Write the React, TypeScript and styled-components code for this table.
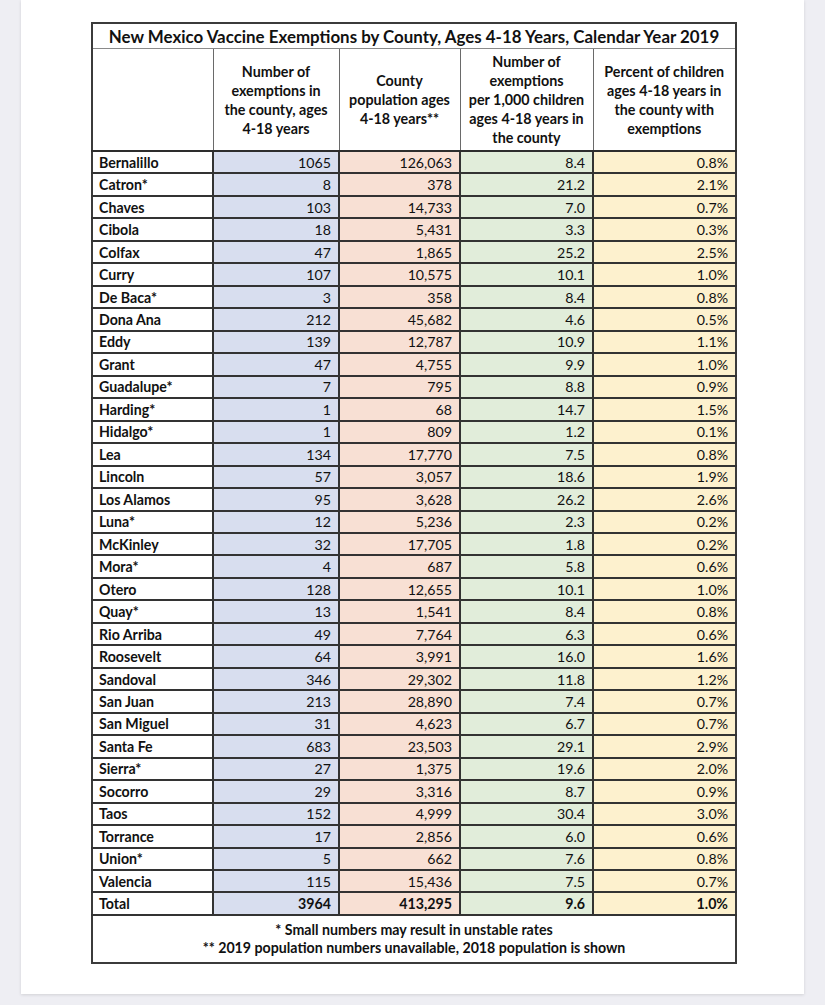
import React from "react";
import styled, { createGlobalStyle } from "styled-components";

const Global = createGlobalStyle`
  html, body { margin: 0; padding: 0; background: #eeeef3; }
  body { font-family: "Lato", "Open Sans", sans-serif; }
`;

const Screen = styled.div`
  width: 825px;
  height: 1005px;
  background: #eeeef3;
  overflow: hidden;
`;

const Sheet = styled.div`
  margin-left: 21px;
  width: 783px;
  height: 972px;
  padding-top: 22px;
  background: #ffffff;
  box-shadow: 0 1px 3px rgba(0, 0, 0, 0.12);
  box-sizing: content-box;
`;

const Table = styled.table`
  margin-left: 70px;
  width: 644px;
  border-collapse: collapse;
  table-layout: fixed;
  color: #111;
  border: 2px solid #3b3b3b;
`;

const TitleCell = styled.th`
  height: 24px;
  padding: 0;
  font-size: 16.9px;
  font-weight: 700;
  text-align: center;
  border-bottom: 1px solid #8a8a8a;
  white-space: nowrap;
`;

const HeadCell = styled.th`
  height: 101px;
  padding: 0 2px;
  font-size: 14.3px;
  line-height: 19px;
  font-weight: 700;
  text-align: center;
  vertical-align: middle;
  border-left: 1px solid #6a6a6a;
  border-bottom: 2px solid #2d2d2d;
  white-space: nowrap;
  &:first-child { border-left: none; }
`;

type Tone = "blue" | "peach" | "green" | "yellow";
const tones: Record<Tone, string> = {
  blue: "#d8deef",
  peach: "#f8e0d4",
  green: "#e1edda",
  yellow: "#fdf1ce",
};

const NameCell = styled.td`
  height: 20.48px;
  padding: 0 6px;
  font-size: 14.2px;
  font-weight: 700;
  text-align: left;
  border-top: 2px solid #333;
  white-space: nowrap;
`;

const NumCell = styled.td<{ $tone: Tone; $bold?: boolean }>`
  padding: 0 7px;
  font-size: 14.2px;
  font-weight: ${(p) => (p.$bold ? 700 : 400)};
  text-align: right;
  background: ${(p) => tones[p.$tone]};
  border-top: 2px solid #333;
  border-left: 2px solid #333;
  white-space: nowrap;
`;

const FootCell = styled.td`
  height: 46px;
  padding: 0;
  font-size: 14.2px;
  line-height: 18px;
  font-weight: 700;
  text-align: center;
  border-top: 2px solid #333;
`;

const rows: [string, string, string, string, string][] = [
  ["Bernalillo", "1065", "126,063", "8.4", "0.8%"],
  ["Catron*", "8", "378", "21.2", "2.1%"],
  ["Chaves", "103", "14,733", "7.0", "0.7%"],
  ["Cibola", "18", "5,431", "3.3", "0.3%"],
  ["Colfax", "47", "1,865", "25.2", "2.5%"],
  ["Curry", "107", "10,575", "10.1", "1.0%"],
  ["De Baca*", "3", "358", "8.4", "0.8%"],
  ["Dona Ana", "212", "45,682", "4.6", "0.5%"],
  ["Eddy", "139", "12,787", "10.9", "1.1%"],
  ["Grant", "47", "4,755", "9.9", "1.0%"],
  ["Guadalupe*", "7", "795", "8.8", "0.9%"],
  ["Harding*", "1", "68", "14.7", "1.5%"],
  ["Hidalgo*", "1", "809", "1.2", "0.1%"],
  ["Lea", "134", "17,770", "7.5", "0.8%"],
  ["Lincoln", "57", "3,057", "18.6", "1.9%"],
  ["Los Alamos", "95", "3,628", "26.2", "2.6%"],
  ["Luna*", "12", "5,236", "2.3", "0.2%"],
  ["McKinley", "32", "17,705", "1.8", "0.2%"],
  ["Mora*", "4", "687", "5.8", "0.6%"],
  ["Otero", "128", "12,655", "10.1", "1.0%"],
  ["Quay*", "13", "1,541", "8.4", "0.8%"],
  ["Rio Arriba", "49", "7,764", "6.3", "0.6%"],
  ["Roosevelt", "64", "3,991", "16.0", "1.6%"],
  ["Sandoval", "346", "29,302", "11.8", "1.2%"],
  ["San Juan", "213", "28,890", "7.4", "0.7%"],
  ["San Miguel", "31", "4,623", "6.7", "0.7%"],
  ["Santa Fe", "683", "23,503", "29.1", "2.9%"],
  ["Sierra*", "27", "1,375", "19.6", "2.0%"],
  ["Socorro", "29", "3,316", "8.7", "0.9%"],
  ["Taos", "152", "4,999", "30.4", "3.0%"],
  ["Torrance", "17", "2,856", "6.0", "0.6%"],
  ["Union*", "5", "662", "7.6", "0.8%"],
  ["Valencia", "115", "15,436", "7.5", "0.7%"],
];

export default function App() {
  return (
    <Screen>
      <Global />
      <Sheet>
        <Table>
          <colgroup>
            <col style={{ width: 121 }} />
            <col style={{ width: 126 }} />
            <col style={{ width: 121 }} />
            <col style={{ width: 133 }} />
            <col style={{ width: 143 }} />
          </colgroup>
          <thead>
            <tr>
              <TitleCell colSpan={5}>
                New Mexico Vaccine Exemptions by County, Ages 4-18 Years, Calendar Year 2019
              </TitleCell>
            </tr>
            <tr>
              <HeadCell></HeadCell>
              <HeadCell>
                Number of
                <br />
                exemptions in
                <br />
                the county, ages
                <br />
                4-18 years
              </HeadCell>
              <HeadCell>
                County
                <br />
                population ages
                <br />
                4-18 years**
              </HeadCell>
              <HeadCell>
                Number of
                <br />
                exemptions
                <br />
                per 1,000 children
                <br />
                ages 4-18 years in
                <br />
                the county
              </HeadCell>
              <HeadCell>
                Percent of children
                <br />
                ages 4-18 years in
                <br />
                the county with
                <br />
                exemptions
              </HeadCell>
            </tr>
          </thead>
          <tbody>
            {rows.map((r) => (
              <tr key={r[0]}>
                <NameCell>{r[0]}</NameCell>
                <NumCell $tone="blue">{r[1]}</NumCell>
                <NumCell $tone="peach">{r[2]}</NumCell>
                <NumCell $tone="green">{r[3]}</NumCell>
                <NumCell $tone="yellow">{r[4]}</NumCell>
              </tr>
            ))}
            <tr>
              <NameCell>Total</NameCell>
              <NumCell $tone="blue" $bold>3964</NumCell>
              <NumCell $tone="peach" $bold>413,295</NumCell>
              <NumCell $tone="green" $bold>9.6</NumCell>
              <NumCell $tone="yellow" $bold>1.0%</NumCell>
            </tr>
          </tbody>
          <tfoot>
            <tr>
              <FootCell colSpan={5}>
                * Small numbers may result in unstable rates
                <br />
                ** 2019 population numbers unavailable, 2018 population is shown
              </FootCell>
            </tr>
          </tfoot>
        </Table>
      </Sheet>
    </Screen>
  );
}
